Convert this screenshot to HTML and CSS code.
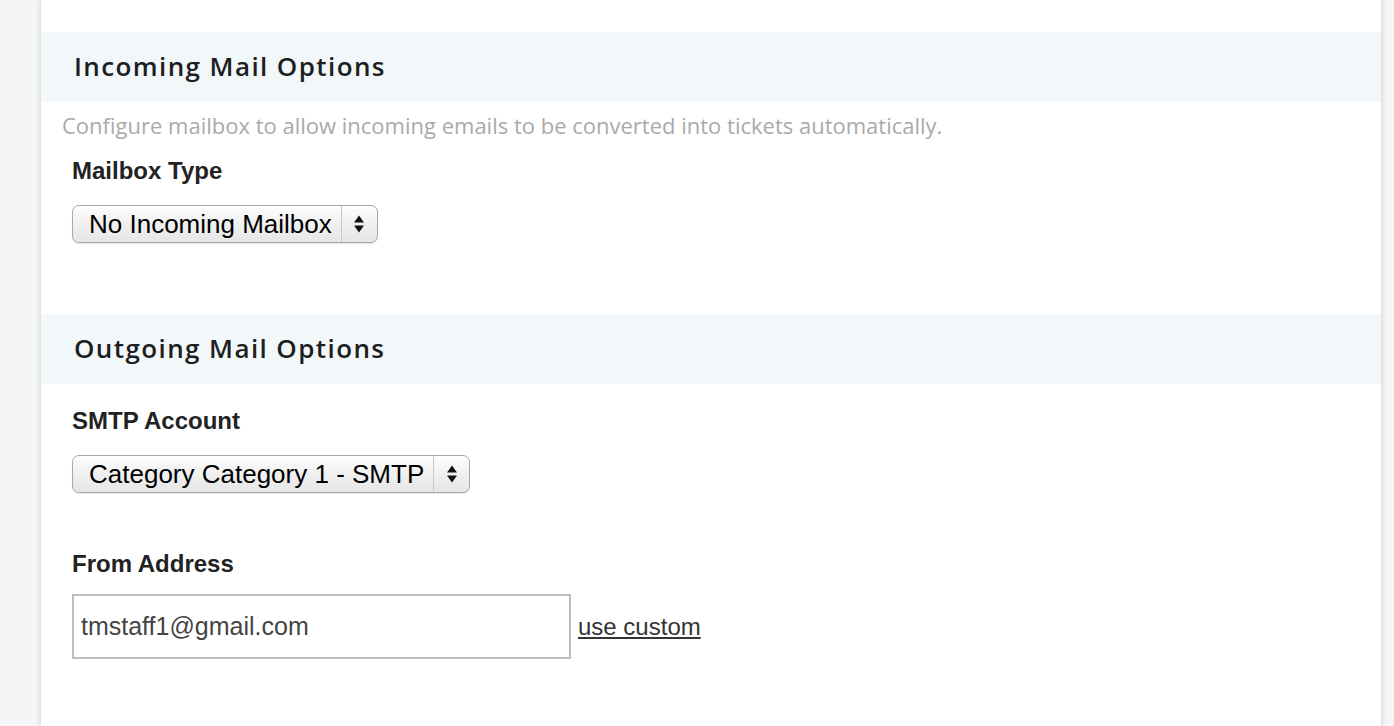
FILE: index.html
```html
<!DOCTYPE html>
<html>
<head>
<meta charset="utf-8">
<link rel="stylesheet" href="styles.css">
</head>
<body>
<div class="page">
  <div class="panel">
    <div class="band"><h2>Incoming Mail Options</h2></div>
    <p class="desc">Configure mailbox to allow incoming emails to be converted into tickets automatically.</p>
    <div class="field first">
      <label>Mailbox Type</label>
      <div class="select"><span class="val">No Incoming Mailbox</span><span class="arrows"><svg width="12" height="20" viewBox="0 0 12 20"><path d="M6 1.5 L11 8.5 H1 Z M6 18.5 L11 11.5 H1 Z" fill="#111"/></svg></span></div>
    </div>
    <div class="band band2"><h2>Outgoing Mail Options</h2></div>
    <div class="field smtp">
      <label>SMTP Account</label>
      <div class="select"><span class="val">Category Category 1 - SMTP</span><span class="arrows"><svg width="12" height="20" viewBox="0 0 12 20"><path d="M6 1.5 L11 8.5 H1 Z M6 18.5 L11 11.5 H1 Z" fill="#111"/></svg></span></div>
    </div>
    <div class="field from">
      <label>From Address</label>
      <div class="row"><div class="input">tmstaff1@gmail.com</div><a class="link" href="#">use custom</a></div>
    </div>
  </div>
</div>
</body>
</html>
```
FILE: styles.css
```css
html, body { margin: 0; padding: 0; }
body { background: #f5f5f5; height: 726px; overflow: hidden; font-family: "Liberation Sans", Arial, sans-serif; }
.page { padding-left: 41px; width: 1340px; }
.panel { background: #fff; height: 726px; padding-top: 32px; box-sizing: border-box; box-shadow: 0 0 6px rgba(0,0,0,0.18); }
.band { background: #f2f7fa; height: 70px; display: flex; align-items: center; padding-left: 33px; }
.band h2 { margin: 0; font-family: "Open Sans", sans-serif; font-weight: 600; font-size: 26px; letter-spacing: 1.4px; color: #1e1e1e; position: relative; top: -1px; }
.desc { margin: 10px 0 0 21px; font-family: "Open Sans", sans-serif; font-size: 22px; color: #aaa; line-height: 26px; }
.field { padding-left: 31px; }
.field label { display: block; font-weight: bold; font-size: 24px; color: #222; line-height: 26px; }
.first { margin-top: 20px; padding-bottom: 71px; }
.first .select { margin-top: 21px; }
.smtp { margin-top: 24px; }
.smtp .select { margin-top: 21px; }
.from { margin-top: 58px; }
.select { display: inline-flex; align-items: stretch; height: 38px; box-sizing: border-box; border: 1px solid #a8a8a8; border-radius: 7px; background: linear-gradient(#fdfdfd, #f0f0f0 50%, #e6e6e6); box-shadow: inset 0 1px 0 #fff, 0 1px 1px rgba(0,0,0,0.1); }
.select .val { font-size: 26px; color: #000; line-height: 36px; padding: 0 9px 0 16px; }
.select .arrows { border-left: 1px solid #c8c8c8; width: 35px; display: flex; align-items: center; justify-content: center; }
.from .row { display: flex; align-items: center; margin-top: 17px; }
.input { width: 499px; height: 65px; box-sizing: border-box; border: 2px solid #bdbdbd; font-size: 25px; color: #444; padding-left: 7px; display: flex; align-items: center; }
.link { font-size: 24px; color: #333; margin-left: 7px; text-decoration: underline; }
```
